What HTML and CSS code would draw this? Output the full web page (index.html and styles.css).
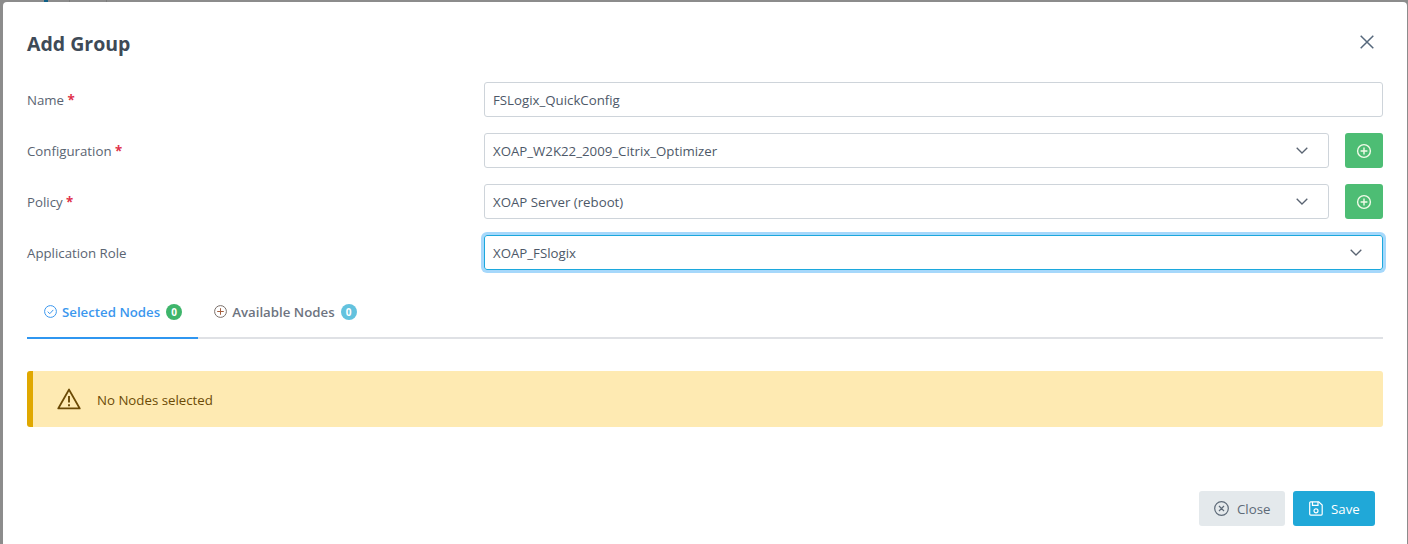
FILE: index.html
```html
<!DOCTYPE html>
<html lang="en">
<head>
<meta charset="utf-8">
<title>Add Group</title>
<link rel="stylesheet" href="styles.css">
</head>
<body>
<div class="backdrop">
  <div class="peek"></div>
  <div class="tick tick-a"></div>
  <div class="tick tick-b"></div>
  <div class="modal">
    <header class="modal-header">
      <h2 class="title">Add Group</h2>
      <button class="x" aria-label="Close">
        <svg width="14" height="14" viewBox="0 0 14 14"><path d="M.7.7l12.600 12.600M13.300.7L.7 13.300" stroke="#56687c" stroke-width="1.5" fill="none"/></svg>
      </button>
    </header>
    <div class="form">
      <div class="row">
        <label class="lbl">Name <span class="req">*</span></label>
        <div class="control"><div class="input">FSLogix_QuickConfig</div></div>
      </div>
      <div class="row">
        <label class="lbl">Configuration <span class="req">*</span></label>
        <div class="control">
          <div class="input select">XOAP_W2K22_2009_Citrix_Optimizer
            <svg class="chev" width="12" height="7" viewBox="0 0 12 7"><path d="M.7.7L6 6l5.300-5.300" stroke="#5a6472" stroke-width="1.300" fill="none"/></svg>
          </div>
          <button class="add"><svg width="16" height="16" viewBox="0 0 16 16"><circle cx="8" cy="8" r="6.400" stroke="#f2fbe8" stroke-width="1.400" fill="none"/><path d="M8 4.600v6.800M4.600 8h6.800" stroke="#f2fbe8" stroke-width="1.400"/></svg></button>
        </div>
      </div>
      <div class="row">
        <label class="lbl">Policy <span class="req">*</span></label>
        <div class="control">
          <div class="input select">XOAP Server (reboot)
            <svg class="chev" width="12" height="7" viewBox="0 0 12 7"><path d="M.7.7L6 6l5.300-5.300" stroke="#5a6472" stroke-width="1.300" fill="none"/></svg>
          </div>
          <button class="add"><svg width="16" height="16" viewBox="0 0 16 16"><circle cx="8" cy="8" r="6.400" stroke="#f2fbe8" stroke-width="1.400" fill="none"/><path d="M8 4.600v6.800M4.600 8h6.800" stroke="#f2fbe8" stroke-width="1.400"/></svg></button>
        </div>
      </div>
      <div class="row">
        <label class="lbl">Application Role</label>
        <div class="control">
          <div class="input select focus">XOAP_FSlogix
            <svg class="chev" width="12" height="7" viewBox="0 0 12 7"><path d="M.7.7L6 6l5.300-5.300" stroke="#5a6472" stroke-width="1.300" fill="none"/></svg>
          </div>
        </div>
      </div>
    </div>
    <nav class="tabs">
      <div class="tab active">
        <svg width="13" height="13" viewBox="0 0 13 13"><circle cx="6.500" cy="6.500" r="5.900" stroke="#3b97ee" fill="none"/><path d="M3.700 6.700l2.100 2 3.500-3.800" stroke="#3b97ee" fill="none"/></svg>
        <span>Selected Nodes</span><span class="badge green">0</span>
      </div>
      <div class="tab">
        <svg width="13" height="13" viewBox="0 0 13 13"><circle cx="6.500" cy="6.500" r="5.900" stroke="#7a6f6a" fill="none"/><path d="M6.500 3.200v6.600M3.200 6.500h6.600" stroke="#a5603f" fill="none"/></svg>
        <span>Available Nodes</span><span class="badge blue">0</span>
      </div>
    </nav>
    <div class="alert">
      <svg width="24" height="22" viewBox="0 0 24 22"><path d="M12 1.600L1.300 20.400h21.400z" stroke="#6b4a05" stroke-width="1.900" fill="none" stroke-linejoin="round"/><path d="M12 8v6.600M12 16.300v2" stroke="#6b4a05" stroke-width="1.900" fill="none"/></svg>
      <span class="alert-text">No Nodes selected</span>
    </div>
    <footer class="foot">
      <button class="btn close">
        <svg width="15" height="15" viewBox="0 0 15 15"><circle cx="7.500" cy="7.500" r="6.800" stroke="#5d6a78" stroke-width="1.200" fill="none"/><path d="M5 5l5 5M10 5l-5 5" stroke="#5d6a78" stroke-width="1.200" fill="none"/></svg>
        Close
      </button>
      <button class="btn save">
        <svg width="14" height="15" viewBox="0 0 14 15"><path d="M1.700.8h8l3.500 3.300v9a1 1 0 0 1-1 1H1.700a1 1 0 0 1-1-1v-11.300a1 1 0 0 1 1-1z" stroke="#fff" stroke-width="1.200" fill="none"/><path d="M3.500.8v3.500h5.500V.8" stroke="#fff" stroke-width="1.200" fill="none"/><circle cx="7" cy="9.800" r="2" stroke="#fff" stroke-width="1.200" fill="none"/></svg>
        Save
      </button>
    </footer>
  </div>
</div>
</body>
</html>
```
FILE: styles.css
```css
* { box-sizing: border-box; }
html, body { margin: 0; height: 100%; overflow: hidden; }
body { font-family: "Open Sans", "Noto Sans", sans-serif; font-size: 13.25px; color: #4d5868; }
.backdrop { height: 544px; background: #8c8c8c; padding: 2px 1px 0 3px; position: relative; overflow: hidden; }
.peek { position: absolute; left: 44px; top: 0; width: 4px; height: 2px; background: #0f5f86; }
.tick { position: absolute; top: 0; width: 1px; height: 2px; background: #7c7c7c; }
.tick-a { left: 69px; }
.tick-b { left: 106px; }
.modal { height: 600px; background: #fff; border-radius: 4px 4px 0 0; padding: 0 24px; }
.modal-header { height: 80px; display: flex; align-items: center; justify-content: space-between; padding-top: 3px; }
.title { margin: 0; font-size: 19.5px; font-weight: 700; color: #3e4a57; }
.x { border: 0; background: none; padding: 0; margin-right: 9px; display: flex; margin-bottom: 4px; }
.form { display: flex; flex-direction: column; gap: 16px; }
.row { display: grid; grid-template-columns: 457px 1fr; height: 35px; align-items: center; }
.lbl { color: #5a6472; }
.req { color: #e0324b; font-weight: 700; }
.control { display: flex; gap: 16px; height: 35px; }
.input { flex: 1; height: 35px; border: 1px solid #ced4da; border-radius: 3px; padding: 0 8px; display: flex; align-items: center; justify-content: space-between; color: #4d5868; white-space: nowrap; }
.select { padding-right: 20px; }
.focus { border-color: #1ca8dd; box-shadow: 0 0 0 3px #a6d8fb; }
.add { width: 38px; height: 35px; border: 0; border-radius: 3px; background: #4dbd74; display: flex; align-items: center; justify-content: center; padding: 0; }
.tabs { display: flex; height: 53px; margin-top: 16px; border-bottom: 2px solid #dfe1e5; }
.tab { display: flex; align-items: center; gap: 5px; padding: 0 16px; height: 53px; font-weight: 600; color: #6d7380; border-bottom: 2px solid transparent; }
.tab.active { color: #3b97ee; border-bottom-color: #2f96f0; padding-left: 17px; }
.badge { width: 16px; height: 16px; margin-left: 1px; border-radius: 50%; color: #fff; font-size: 10px; font-weight: 700; display: flex; align-items: center; justify-content: center; }
.green { background: #3eb56b; }
.blue { background: #63c2de; }
.alert { margin-top: 32px; height: 56px; background: #feeab2; border-left: 6px solid #e0a800; border-radius: 3px; display: flex; align-items: center; gap: 16px; padding-left: 24px; color: #6b4a05; }
.alert-text { padding-top: 2px; }
.foot { display: flex; justify-content: flex-end; gap: 8px; margin-top: 64px; padding-right: 8px; }
.btn { height: 35px; border: 0; border-radius: 3px; display: flex; align-items: center; gap: 8px; font: inherit; }
.close { background: #e4e9ec; color: #5d6a78; width: 86px; padding: 0 0 0 15px; }
.save { background: #20a8d8; color: #fff; width: 82px; padding: 0 0 0 16px; }
```
